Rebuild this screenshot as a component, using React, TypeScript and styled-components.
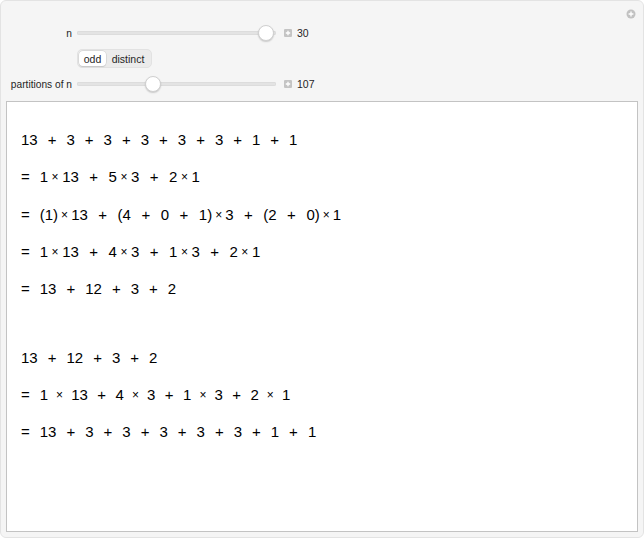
import styled, { createGlobalStyle } from "styled-components";

const GlobalStyle = createGlobalStyle`
  html, body {
    margin: 0;
    padding: 0;
    background: #ffffff;
  }
  body {
    font-family: "Liberation Sans", Arial, sans-serif;
  }
`;

const Panel = styled.div`
  position: relative;
  width: 644px;
  height: 538px;
  box-sizing: border-box;
  background: #f5f5f5;
  border: 1px solid #e3e3e3;
  border-radius: 6px;
  display: flex;
  flex-direction: column;
`;

const CornerButton = styled.div`
  position: absolute;
  top: 8px;
  right: 7px;
  width: 10px;
  height: 10px;
  display: flex;
`;

const Controls = styled.div`
  display: grid;
  grid-template-columns: 71px 199px auto;
  column-gap: 5px;
  row-gap: 8px;
  align-items: center;
  padding-top: 24px;
`;

const Label = styled.div`
  font-size: 10.2px;
  color: #1f1f1f;
  text-align: right;
  white-space: nowrap;
`;

const Track = styled.div`
  position: relative;
  height: 16px;
  display: flex;
  align-items: center;
`;

const TrackLine = styled.div`
  width: 100%;
  height: 4px;
  border-radius: 2px;
  background: #e3e3e3;
  box-shadow: inset 0 0 0 0.5px #d6d6d6;
`;

const Thumb = styled.div`
  position: absolute;
  top: 0;
  width: 16px;
  height: 16px;
  box-sizing: border-box;
  border-radius: 50%;
  background: #ffffff;
  border: 1px solid #d0d0d0;
  box-shadow: 0 1px 1.5px rgba(0, 0, 0, 0.18);
`;

const ValueCell = styled.div`
  display: flex;
  align-items: center;
  gap: 5px;
  padding-left: 3px;
  font-size: 10.5px;
  color: #1f1f1f;
`;

const Segmented = styled.div`
  grid-column: 2 / -1;
  justify-self: start;
  display: inline-flex;
  box-sizing: border-box;
  height: 19px;
  padding: 1px;
  border-radius: 5px;
  background: #ebebeb;
  border: 1px solid #e2e2e2;
`;

const Segment = styled.div<{ $active?: boolean; $w: number }>`
  width: ${(p) => p.$w}px;
  display: flex;
  align-items: center;
  justify-content: center;
  font-size: 10.5px;
  color: #1f1f1f;
  border-radius: 4px;
  background: ${(p) => (p.$active ? "#ffffff" : "transparent")};
  box-shadow: ${(p) => (p.$active ? "0 0 0 0.5px #c9c9c9, 0 1px 1px rgba(0,0,0,0.15)" : "none")};
`;

const Output = styled.div`
  flex: 1;
  margin: 9px 5px 5px;
  box-sizing: border-box;
  background: #ffffff;
  border: 1px solid #c3c3c3;
  padding: 29px 0 0 14px;
  display: flex;
  flex-direction: column;
  gap: 52px;
`;

const Block = styled.div<{ $gap: number }>`
  display: flex;
  flex-direction: column;
  gap: ${(p) => p.$gap}px;
`;

const Row = styled.div`
  font-size: 15px;
  line-height: 17px;
  height: 17px;
  color: #000000;
  white-space: nowrap;
`;

const Op = styled.span<{ $l: number; $r: number; $small?: boolean }>`
  display: inline-block;
  margin-left: ${(p) => p.$l}px;
  margin-right: ${(p) => p.$r}px;
  font-size: ${(p) => (p.$small ? "12px" : "15px")};
  line-height: 1;
  vertical-align: ${(p) => (p.$small ? "1px" : "baseline")};
`;

function PlusBox() {
  return (
    <svg width="8" height="8" viewBox="0 0 8 8">
      <rect x="0" y="0" width="8" height="8" rx="1" fill="#c4c4c4" />
      <path d="M4 1.8v4.4M1.8 4h4.4" stroke="#ffffff" strokeWidth="1.3" />
    </svg>
  );
}

function Slider({ label, pos, value }: { label: string; pos: number; value: string }) {
  return (
    <>
      <Label>{label}</Label>
      <Track>
        <TrackLine />
        <Thumb style={{ left: `${pos * (199 - 16)}px` }} />
      </Track>
      <ValueCell>
        <PlusBox />
        <span>{value}</span>
      </ValueCell>
    </>
  );
}

type Spacing = { eq?: number; plus: number; times?: number };

function Expr({ text, s }: { text: string; s: Spacing }) {
  const parts = text.split(" ");
  return (
    <Row>
      {parts.map((t, i) => {
        if (t === "=") return <Op key={i} $l={0} $r={s.eq ?? 10}>=</Op>;
        if (t === "+") return <Op key={i} $l={s.plus} $r={s.plus}>+</Op>;
        if (t === "×") {
          const m = s.times ?? 3;
          return <Op key={i} $l={m} $r={m} $small>×</Op>;
        }
        return <span key={i}>{t}</span>;
      })}
    </Row>
  );
}

const first: { text: string; s: Spacing }[] = [
  { text: "13 + 3 + 3 + 3 + 3 + 3 + 1 + 1", s: { plus: 10 } },
  { text: "= 1 × 13 + 5 × 3 + 2 × 1", s: { plus: 10.5, times: 3.5 } },
  { text: "= (1) × 13 + (4 + 0 + 1) × 3 + (2 + 0) × 1", s: { plus: 10.5, times: 3 } },
  { text: "= 1 × 13 + 4 × 3 + 1 × 3 + 2 × 1", s: { plus: 10.5, times: 3.5 } },
  { text: "= 13 + 12 + 3 + 2", s: { plus: 10 } },
];

const second: { text: string; s: Spacing }[] = [
  { text: "13 + 12 + 3 + 2", s: { plus: 10 } },
  { text: "= 1 × 13 + 4 × 3 + 1 × 3 + 2 × 1", s: { plus: 9.5, times: 8 } },
  { text: "= 13 + 3 + 3 + 3 + 3 + 3 + 1 + 1", s: { plus: 10 } },
];

export default function App() {
  return (
    <>
      <GlobalStyle />
      <Panel>
        <CornerButton>
          <svg width="10" height="10" viewBox="0 0 10 10">
            <circle cx="5" cy="5" r="4.5" fill="#c2c2c2" />
            <path d="M5 2.6v4.8M2.6 5h4.8" stroke="#ffffff" strokeWidth="1.3" />
          </svg>
        </CornerButton>
        <Controls>
          <Slider label="n" pos={0.99} value="30" />
          <Label />
          <Segmented>
            <Segment $active $w={27}>odd</Segment>
            <Segment $w={44}>distinct</Segment>
          </Segmented>
          <Slider label="partitions of n" pos={0.372} value="107" />
        </Controls>
        <Output>
          <Block $gap={20.25}>
            {first.map((l, i) => (
              <Expr key={i} text={l.text} s={l.s} />
            ))}
          </Block>
          <Block $gap={20}>
            {second.map((l, i) => (
              <Expr key={i} text={l.text} s={l.s} />
            ))}
          </Block>
        </Output>
      </Panel>
    </>
  );
}
